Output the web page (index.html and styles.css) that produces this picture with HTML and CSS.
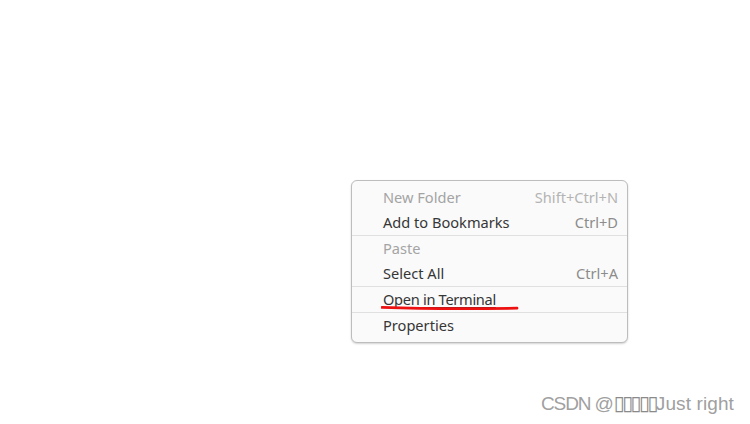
FILE: index.html
```html
<!DOCTYPE html>
<html>
<head>
<meta charset="utf-8">
<link rel="stylesheet" href="styles.css">
</head>
<body>
<div class="stage">
  <div class="menu">
    <div class="item disabled"><span class="label">New Folder</span><span class="accel">Shift+Ctrl+N</span></div>
    <div class="item"><span class="label">Add to Bookmarks</span><span class="accel">Ctrl+D</span></div>
    <div class="sep"></div>
    <div class="item disabled"><span class="label">Paste</span></div>
    <div class="item"><span class="label">Select All</span><span class="accel">Ctrl+A</span></div>
    <div class="sep"></div>
    <div class="item"><span class="label u">Open in Terminal</span></div>
    <div class="sep"></div>
    <div class="item"><span class="label">Properties</span></div>
    <svg class="mark" width="140" height="8" viewBox="0 0 140 8"><path d="M1 3.4 C40 4.8 90 5.0 136 4.2" stroke="#ee1111" stroke-width="2.8" fill="none" stroke-linecap="round"/></svg>
  </div>
  <div class="watermark"><span class="wm-a">CSDN @</span><span class="tofu">▯▯▯▯▯</span><span class="wm-b">Just right</span></div>
</div>
</body>
</html>
```
FILE: styles.css
```css
html, body { margin: 0; padding: 0; background: #ffffff; }
.stage {
  width: 750px;
  height: 424px;
  display: flex;
  flex-direction: column;
  align-items: flex-start;
  padding: 180px 0 0 351px;
  box-sizing: border-box;
}
.menu {
  position: relative;
  width: 275px;
  background: #fafafa;
  border: 1px solid #bdbdbd;
  border-radius: 6px;
  padding: 4px 0;
  box-shadow: 0 1px 2px rgba(0,0,0,0.18);
  font-family: "Noto Sans", sans-serif;
  font-size: 14.6px;
}
.item {
  box-sizing: border-box;
  height: 25px;
  display: flex;
  align-items: center;
  justify-content: space-between;
  padding: 0 9px 2px 31px;
  color: #363636;
}
.item.disabled { color: #a4a4a4; }
.accel { color: #8c8c8c; }
.item.disabled .accel { color: #b4b4b4; }
.u { text-decoration: underline; text-decoration-thickness: 1px; text-underline-offset: 2px; letter-spacing: -0.3px; }
.sep { height: 1px; background: #e0e0e0; }
.mark { position: absolute; left: 29px; top: 123px; }
.watermark {
  margin: 48px 0 0 190px;
  font-family: "Liberation Sans", Arial, sans-serif;
  font-size: 19px;
  color: #a0a0a0;
  white-space: nowrap;
  display: flex;
  align-items: baseline;
}
.wm-a { letter-spacing: -1.1px; margin-right: 1px; }
.wm-b { letter-spacing: 0.1px; }
.tofu { font-family: "DejaVu Sans", sans-serif; font-size: 20px; letter-spacing: -2.6px; color: #8a8a8a; }
```
